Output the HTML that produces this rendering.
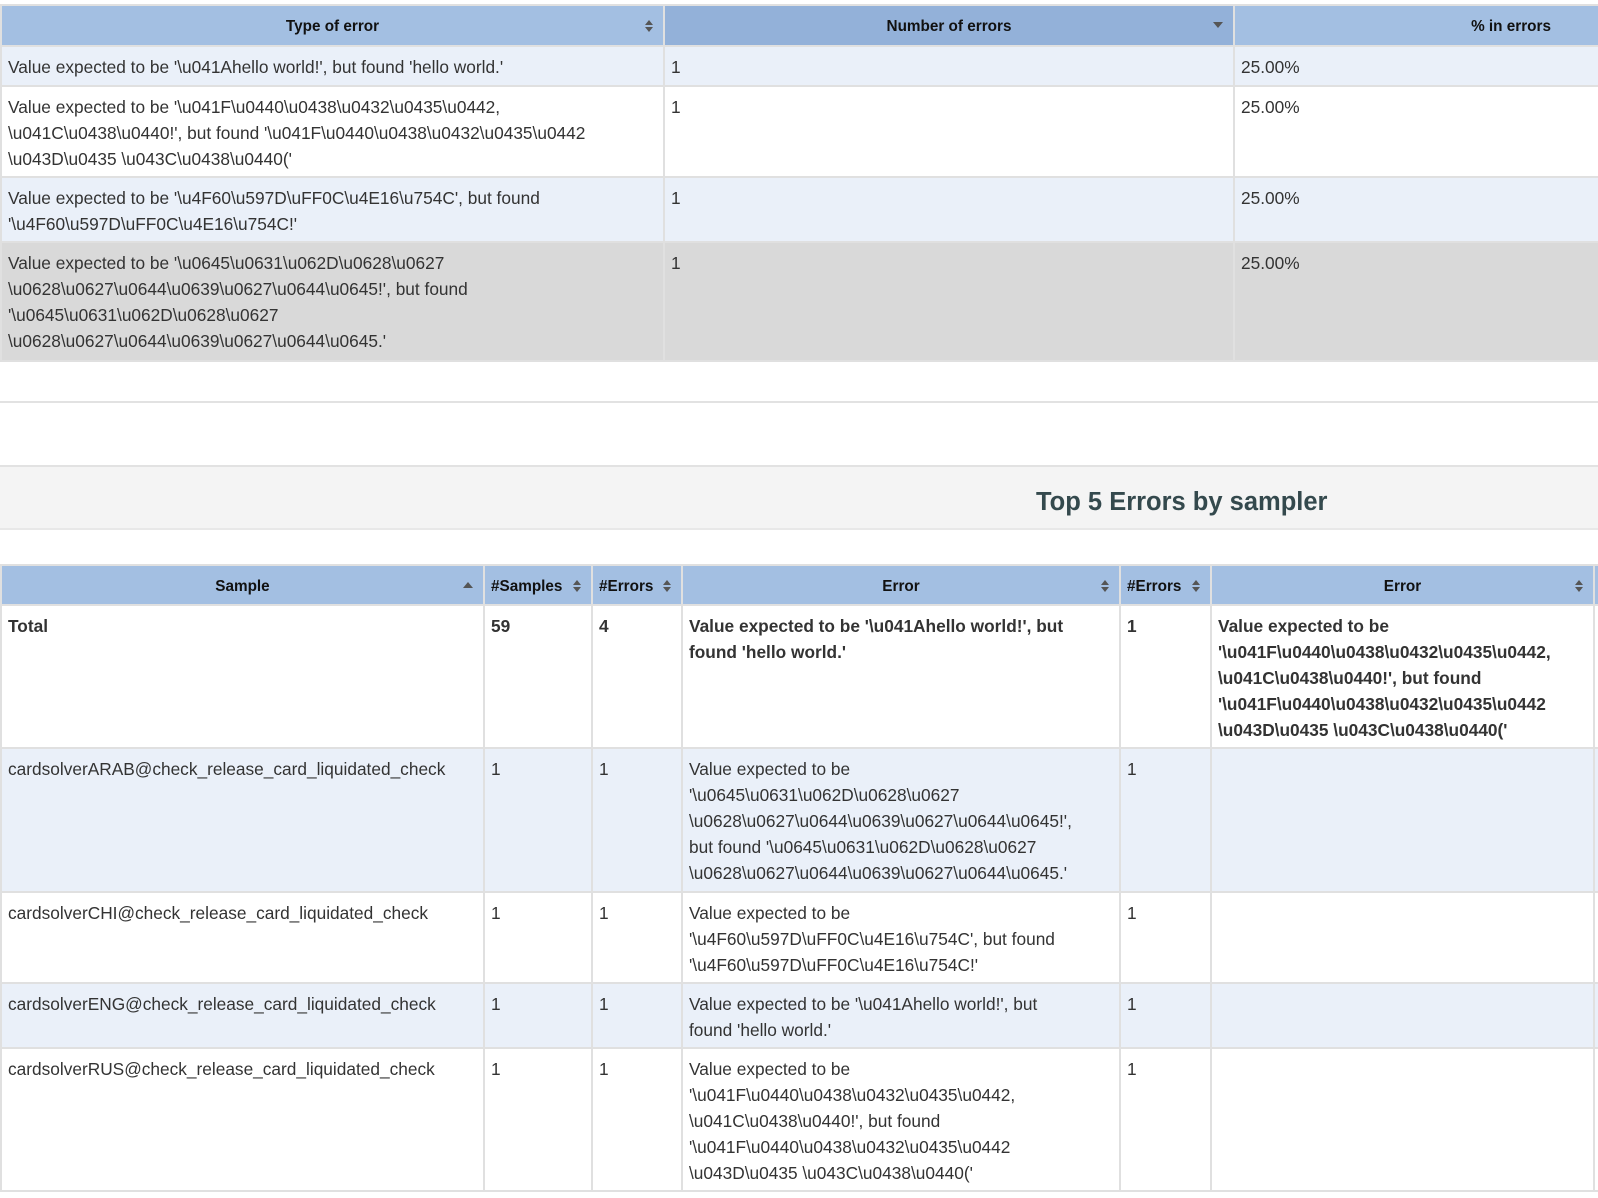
<!DOCTYPE html>
<html style="overflow:hidden"><head><meta charset="utf-8"><style>
html,body{margin:0;width:1598px;height:1198px;overflow:hidden}
body{background:#fff;font-family:"Liberation Sans",Arial,sans-serif;color:#333}
#w{position:relative;width:1598px;height:1198px;overflow:hidden}
table{position:absolute;left:0;border-collapse:collapse;table-layout:fixed;font-size:17.3px}
td,th{border:2px solid #e0e0e0;padding:0 6px;vertical-align:top;line-height:26px;overflow:hidden}
td{padding-top:7px}
th{background:#a3bfe2;color:#111;font-size:15.3px;font-weight:bold;vertical-align:middle;position:relative;border-color:#e0e0e0;padding-top:3px}
tr.b td{background:#eaf0f9}
tr.g td{background:#d9d9d9}
.s{position:absolute;right:10px;top:13px;width:8px;height:14px}
.bold td{font-weight:bold}
</style></head><body><div id="w">
<svg width="0" height="0" style="position:absolute"><defs><g id="ud"><path d="M0 6L4 1L8 6Z M0 8L4 13L8 8Z" fill="#555"/></g><g id="dn"><path d="M0 3L5 9L10 3Z" fill="#555"/></g><g id="up"><path d="M0 9L5 3L10 9Z" fill="#555"/></g></defs></svg>

<table style="top:4px;width:1653px;min-width:1653px">
<colgroup><col style="width:663px"><col style="width:570px"><col style="width:420px"></colgroup>
<tr style="height:41px"><th>Type of error<svg class="s"><use href="#ud"/></svg></th><th style="background:#93b1d9">Number of errors<svg class="s" style="width:10px"><use href="#dn"/></svg></th><th style="text-align:right;padding-right:102px">% in errors</th></tr>
<tr class="b" style="height:40px"><td>Value expected to be '\u041Ahello world!', but found 'hello world.'</td><td>1</td><td>25.00%</td></tr>
<tr style="height:91px"><td>Value expected to be '\u041F\u0440\u0438\u0432\u0435\u0442,<br>\u041C\u0438\u0440!', but found '\u041F\u0440\u0438\u0432\u0435\u0442<br>\u043D\u0435 \u043C\u0438\u0440('</td><td>1</td><td>25.00%</td></tr>
<tr class="b" style="height:65px"><td>Value expected to be '\u4F60\u597D\uFF0C\u4E16\u754C', but found<br>'\u4F60\u597D\uFF0C\u4E16\u754C!'</td><td>1</td><td>25.00%</td></tr>
<tr class="g" style="height:119px"><td>Value expected to be '\u0645\u0631\u062D\u0628\u0627<br>\u0628\u0627\u0644\u0639\u0627\u0644\u0645!', but found<br>'\u0645\u0631\u062D\u0628\u0627<br>\u0628\u0627\u0644\u0639\u0627\u0644\u0645.'</td><td>1</td><td>25.00%</td></tr>
</table>

<div style="position:absolute;left:0;top:401px;width:1598px;height:2px;background:#e2e2e2"></div>
<div style="position:absolute;left:0;top:465px;width:1598px;height:65px;background:#f4f4f4;border-top:2px solid #e2e2e2;border-bottom:2px solid #e8e8e8;box-sizing:border-box"></div>
<div style="position:absolute;left:1036px;top:488px;font-size:25.5px;font-weight:bold;color:#34494d">Top 5 Errors by sampler</div>

<table style="top:564px;width:1633px;min-width:1633px">
<colgroup><col style="width:483px"><col style="width:108px"><col style="width:90px"><col style="width:438px"><col style="width:91px"><col style="width:383px"><col style="width:40px"></colgroup>
<tr style="height:40px"><th>Sample<svg class="s" style="width:10px"><use href="#up"/></svg></th><th style="text-align:left">#Samples<svg class="s"><use href="#ud"/></svg></th><th style="text-align:left">#Errors<svg class="s"><use href="#ud"/></svg></th><th>Error<svg class="s"><use href="#ud"/></svg></th><th style="text-align:left">#Errors<svg class="s"><use href="#ud"/></svg></th><th>Error<svg class="s"><use href="#ud"/></svg></th><th></th></tr>
<tr class="bold" style="height:143px"><td>Total</td><td>59</td><td>4</td><td>Value expected to be '\u041Ahello world!', but found 'hello world.'</td><td>1</td><td>Value expected to be '\u041F\u0440\u0438\u0432\u0435\u0442,<br>\u041C\u0438\u0440!', but found '\u041F\u0440\u0438\u0432\u0435\u0442<br>\u043D\u0435 \u043C\u0438\u0440('</td><td></td></tr>
<tr class="b" style="height:144px"><td>cardsolverARAB@check_release_card_liquidated_check</td><td>1</td><td>1</td><td>Value expected to be<br>'\u0645\u0631\u062D\u0628\u0627<br>\u0628\u0627\u0644\u0639\u0627\u0644\u0645!',<br>but found '\u0645\u0631\u062D\u0628\u0627<br>\u0628\u0627\u0644\u0639\u0627\u0644\u0645.'</td><td>1</td><td></td><td></td></tr>
<tr style="height:91px"><td>cardsolverCHI@check_release_card_liquidated_check</td><td>1</td><td>1</td><td>Value expected to be<br>'\u4F60\u597D\uFF0C\u4E16\u754C', but found<br>'\u4F60\u597D\uFF0C\u4E16\u754C!'</td><td>1</td><td></td><td></td></tr>
<tr class="b" style="height:65px"><td>cardsolverENG@check_release_card_liquidated_check</td><td>1</td><td>1</td><td>Value expected to be '\u041Ahello world!', but<br>found 'hello world.'</td><td>1</td><td></td><td></td></tr>
<tr style="height:143px"><td>cardsolverRUS@check_release_card_liquidated_check</td><td>1</td><td>1</td><td>Value expected to be<br>'\u041F\u0440\u0438\u0432\u0435\u0442,<br>\u041C\u0438\u0440!', but found<br>'\u041F\u0440\u0438\u0432\u0435\u0442<br>\u043D\u0435 \u043C\u0438\u0440('</td><td>1</td><td></td><td></td></tr>
</table>
</div></body></html>
